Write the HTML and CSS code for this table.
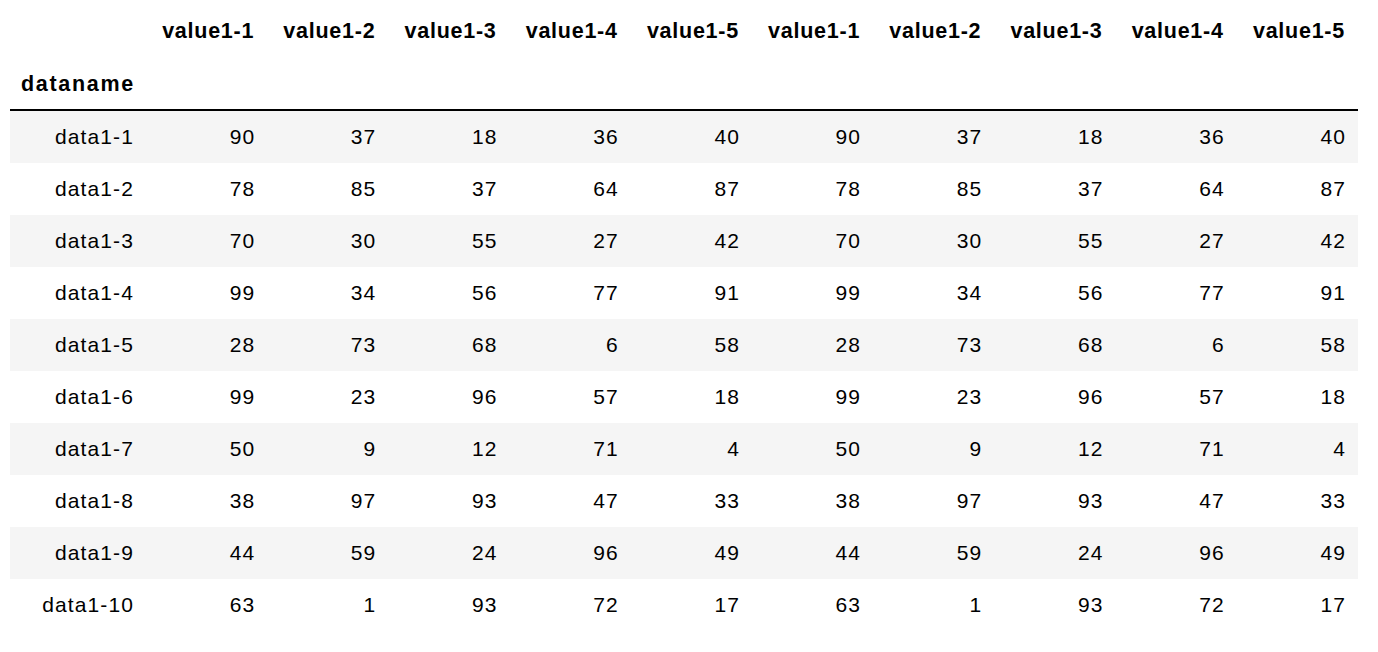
FILE: index.html
```html
<!DOCTYPE html>
<html>
<head>
<meta charset="utf-8">
<link rel="stylesheet" href="styles.css">
</head>
<body>
<table class="df">
  <colgroup>
    <col class="idx-col">
    <col><col><col><col><col><col><col><col><col><col>
  </colgroup>
  <thead>
    <tr class="cols">
      <th></th>
      <th>value1-1</th><th>value1-2</th><th>value1-3</th><th>value1-4</th><th>value1-5</th>
      <th>value1-1</th><th>value1-2</th><th>value1-3</th><th>value1-4</th><th>value1-5</th>
    </tr>
    <tr class="names">
      <th>dataname</th>
      <th></th><th></th><th></th><th></th><th></th><th></th><th></th><th></th><th></th><th></th>
    </tr>
  </thead>
  <tbody>
    <tr><th>data1-1</th><td>90</td><td>37</td><td>18</td><td>36</td><td>40</td><td>90</td><td>37</td><td>18</td><td>36</td><td>40</td></tr>
    <tr><th>data1-2</th><td>78</td><td>85</td><td>37</td><td>64</td><td>87</td><td>78</td><td>85</td><td>37</td><td>64</td><td>87</td></tr>
    <tr><th>data1-3</th><td>70</td><td>30</td><td>55</td><td>27</td><td>42</td><td>70</td><td>30</td><td>55</td><td>27</td><td>42</td></tr>
    <tr><th>data1-4</th><td>99</td><td>34</td><td>56</td><td>77</td><td>91</td><td>99</td><td>34</td><td>56</td><td>77</td><td>91</td></tr>
    <tr><th>data1-5</th><td>28</td><td>73</td><td>68</td><td>6</td><td>58</td><td>28</td><td>73</td><td>68</td><td>6</td><td>58</td></tr>
    <tr><th>data1-6</th><td>99</td><td>23</td><td>96</td><td>57</td><td>18</td><td>99</td><td>23</td><td>96</td><td>57</td><td>18</td></tr>
    <tr><th>data1-7</th><td>50</td><td>9</td><td>12</td><td>71</td><td>4</td><td>50</td><td>9</td><td>12</td><td>71</td><td>4</td></tr>
    <tr><th>data1-8</th><td>38</td><td>97</td><td>93</td><td>47</td><td>33</td><td>38</td><td>97</td><td>93</td><td>47</td><td>33</td></tr>
    <tr><th>data1-9</th><td>44</td><td>59</td><td>24</td><td>96</td><td>49</td><td>44</td><td>59</td><td>24</td><td>96</td><td>49</td></tr>
    <tr><th>data1-10</th><td>63</td><td>1</td><td>93</td><td>72</td><td>17</td><td>63</td><td>1</td><td>93</td><td>72</td><td>17</td></tr>
  </tbody>
</table>
</body>
</html>
```

FILE: styles.css
```css
html, body {
  background: #ffffff;
}
body {
  margin: 5px 0 0 10px;
  font-family: "Liberation Sans", Arial, sans-serif;
  font-size: 21px;
  letter-spacing: 1.1px;
  color: #000000;
}
.df {
  width: 1348px;
  table-layout: fixed;
  border-collapse: separate;
  border-spacing: 0;
}
.idx-col {
  width: 136px;
}
.df th,
.df td {
  height: 52px;
  padding: 0 12px 0 0;
  text-align: right;
  vertical-align: middle;
  white-space: nowrap;
  line-height: normal;
  box-sizing: border-box;
}
.df thead th {
  font-weight: bold;
  font-size: 21.5px;
}
.df thead tr.cols th {
  letter-spacing: 0.75px;
  padding-right: 13px;
}
.df thead tr.names th {
  height: 54px;
  border-bottom: 2px solid #000000;
  padding-top: 2px;
  letter-spacing: 1.7px;
  padding-right: 11px;
}
.df tbody th {
  font-weight: normal;
}
.df tbody tr:nth-child(odd) {
  background: #f5f5f5;
}
```
